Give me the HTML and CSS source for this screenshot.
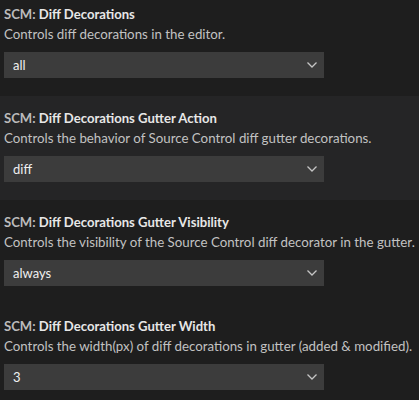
FILE: index.html
```html
<!DOCTYPE html>
<html>
<head>
<meta charset="utf-8">
<link rel="stylesheet" href="styles.css">
</head>
<body>
<div class="list">
  <div class="setting">
    <div class="title"><span class="cat">SCM: </span><span class="name">Diff Decorations</span></div>
    <div class="desc">Controls diff decorations in the editor.</div>
    <div class="select"><span>all</span><svg class="chev" width="12" height="8" viewBox="0 0 12 8"><path d="M1.5 1.5 L6 6 L10.5 1.5" fill="none" stroke="#c5c5c5" stroke-width="1.3"/></svg></div>
  </div>
  <div class="setting hover">
    <div class="title"><span class="cat">SCM: </span><span class="name">Diff Decorations Gutter Action</span></div>
    <div class="desc">Controls the behavior of Source Control diff gutter decorations.</div>
    <div class="select"><span>diff</span><svg class="chev" width="12" height="8" viewBox="0 0 12 8"><path d="M1.5 1.5 L6 6 L10.5 1.5" fill="none" stroke="#c5c5c5" stroke-width="1.3"/></svg></div>
  </div>
  <div class="setting">
    <div class="title"><span class="cat">SCM: </span><span class="name">Diff Decorations Gutter Visibility</span></div>
    <div class="desc">Controls the visibility of the Source Control diff decorator in the gutter.</div>
    <div class="select"><span>always</span><svg class="chev" width="12" height="8" viewBox="0 0 12 8"><path d="M1.5 1.5 L6 6 L10.5 1.5" fill="none" stroke="#c5c5c5" stroke-width="1.3"/></svg></div>
  </div>
  <div class="setting">
    <div class="title"><span class="cat">SCM: </span><span class="name">Diff Decorations Gutter Width</span></div>
    <div class="desc">Controls the width(px) of diff decorations in gutter (added &amp; modified).</div>
    <div class="select"><span>3</span><svg class="chev" width="12" height="8" viewBox="0 0 12 8"><path d="M1.5 1.5 L6 6 L10.5 1.5" fill="none" stroke="#c5c5c5" stroke-width="1.3"/></svg></div>
  </div>
</div>
</body>
</html>
```

FILE: styles.css
```css
html, body {
  margin: 0;
  padding: 0;
  background: #1e1e1e;
  height: 100%;
  overflow: hidden;
}
body {
  font-family: Lato, "Open Sans", sans-serif;
  font-size: 13px;
}
.list {
  margin-top: -8px;
}
.setting {
  height: 104px;
  box-sizing: border-box;
  padding: 13px 0 0 4px;
}
.setting.hover {
  background: #252526;
}
.title {
  line-height: 18px;
  height: 18px;
  white-space: nowrap;
  font-size: 13.1px;
}
.cat {
  color: #bbbbbb;
  font-weight: 700;
}
.name {
  color: #e7e7e7;
  font-weight: 700;
}
.desc {
  margin-top: 2px;
  line-height: 18px;
  height: 18px;
  font-size: 13.3px;
  color: #c2c2c2;
  white-space: nowrap;
}
.select {
  margin-top: 9px;
  width: 320px;
  height: 26px;
  box-sizing: border-box;
  background: #3c3c3c;
  color: #f0f0f0;
  display: flex;
  align-items: center;
  justify-content: space-between;
  padding: 0 6px 0 9px;
}
.chev {
  display: block;
}
```
